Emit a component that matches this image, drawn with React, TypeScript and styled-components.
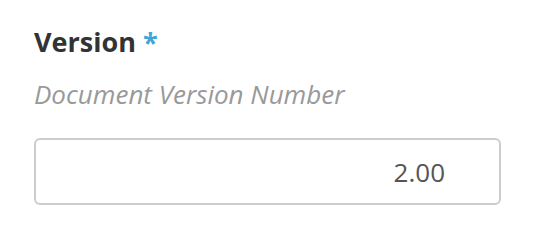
import { createGlobalStyle, styled } from 'styled-components'

const GlobalStyle = createGlobalStyle`
  html, body {
    margin: 0;
    padding: 0;
    background: #ffffff;
  }
  body {
    font-family: 'Open Sans', 'Noto Sans', sans-serif;
  }
`

export default function App() {
  return (
    <>
      <GlobalStyle />
      <Field>
        <Label>
          Version <Required>*</Required>
        </Label>
        <Help>Document Version Number</Help>
        <NumberInput type="text" defaultValue="2.00" readOnly />
      </Field>
    </>
  )
}

const Field = styled.div`
  display: flex;
  flex-direction: column;
  padding: 22px 0 0 34px;
  width: 468px;
`
const Label = styled.label`
  font-size: 27px;
  font-weight: 700;
  color: #333333;
  line-height: 40px;
`
const Required = styled.span`
  color: #3fa6d6;
`
const Help = styled.div`
  margin-top: 14px;
  font-size: 26px;
  font-style: italic;
  color: #999999;
  line-height: 36px;
`
const NumberInput = styled.input`
  box-sizing: border-box;
  margin-top: 26px;
  width: 467px;
  height: 67px;
  border: 2px solid #cccccc;
  border-radius: 6px;
  padding: 0 54px 0 16px;
  text-align: right;
  font-family: 'Open Sans', 'Noto Sans', sans-serif;
  font-size: 26px;
  color: #555555;
  outline: none;
`
